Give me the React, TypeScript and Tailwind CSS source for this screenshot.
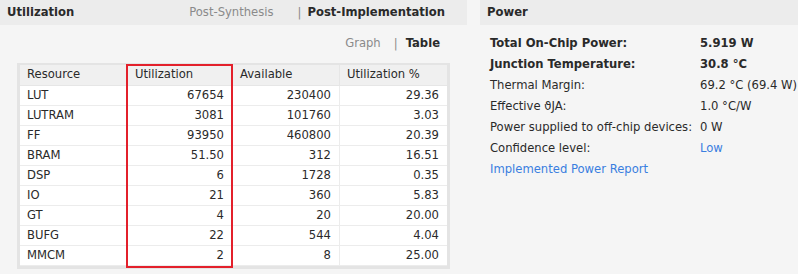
import React from 'react';

const rows = [
  ['LUT', '67654', '230400', '29.36'],
  ['LUTRAM', '3081', '101760', '3.03'],
  ['FF', '93950', '460800', '20.39'],
  ['BRAM', '51.50', '312', '16.51'],
  ['DSP', '6', '1728', '0.35'],
  ['IO', '21', '360', '5.83'],
  ['GT', '4', '20', '20.00'],
  ['BUFG', '22', '544', '4.04'],
  ['MMCM', '2', '8', '25.00'],
];

const power: { label: string; value: string; bold?: boolean; link?: boolean }[] = [
  { label: 'Total On-Chip Power:', value: '5.919 W', bold: true },
  { label: 'Junction Temperature:', value: '30.8 °C', bold: true },
  { label: 'Thermal Margin:', value: '69.2 °C (69.4 W)' },
  { label: 'Effective ϑJA:', value: '1.0 °C/W' },
  { label: 'Power supplied to off-chip devices:', value: '0 W' },
  { label: 'Confidence level:', value: 'Low', link: true },
];

export default function App() {
  return (
    <div className="flex w-[798px] h-[274px] bg-[#f5f5f5] text-[11.6px] text-[#2a2a2a] font-['DejaVu_Sans',sans-serif] overflow-hidden">
      {/* Utilization panel */}
      <div className="w-[467px] flex flex-col">
        <div className="h-[25px] bg-[#ececec] flex items-center pl-[7px] pr-[22px]">
          <span className="font-bold">Utilization</span>
          <div className="ml-auto flex items-center">
            <span className="text-[#8a8a8a]">Post-Synthesis</span>
            <span className="text-[#8a8a8a] ml-[24px] mr-[6px]">|</span>
            <span className="font-bold">Post-Implementation</span>
          </div>
        </div>

        <div className="h-[38px] flex items-center justify-end pr-[27px]">
          <span className="text-[#8a8a8a]">Graph</span>
          <span className="text-[#8a8a8a] ml-[13px] mr-[8px]">|</span>
          <span className="font-bold">Table</span>
        </div>

        <div className="relative ml-[17px] w-[433px] border-[3px] border-t-2 border-[#e4e4e4] bg-white">
          <div className="grid grid-cols-[107px_105px_107px_108px]">
            {['Resource', 'Utilization', 'Available', 'Utilization %'].map((h, i) => (
              <div
                key={h}
                className={`h-[21px] flex items-center pl-[7px] bg-[#f0f0f0] border-b border-[#e6e6e6] ${i > 0 ? 'border-l' : ''}`}
              >
                {h}
              </div>
            ))}
            {rows.map((r) =>
              r.map((c, i) => (
                <div
                  key={r[0] + i}
                  className={`h-[20px] flex items-center border-b border-[#ececec] ${
                    i === 0 ? 'pl-[7px]' : 'justify-end pr-[8px] border-l'
                  }`}
                >
                  {c}
                </div>
              ))
            )}
          </div>
          {/* highlight around Utilization column */}
          <div className="absolute left-[106px] top-[-1px] w-[107px] bottom-[-2px] border-2 border-[#e3202b] pointer-events-none" />
        </div>
      </div>

      {/* Power panel */}
      <div className="ml-[13px] flex-1 flex flex-col">
        <div className="h-[25px] bg-[#ececec] flex items-center pl-[7px]">
          <span className="font-bold">Power</span>
        </div>
        <div className="pl-[10px] pt-[8px] flex flex-col">
          {power.map((p) => (
            <div key={p.label} className="h-[21px] flex items-center">
              <span className={`w-[210px] shrink-0 ${p.bold ? 'font-bold' : ''}`}>{p.label}</span>
              <span className={`whitespace-nowrap ${p.bold ? 'font-bold' : ''} ${p.link ? 'text-[#3a7ee0]' : ''}`}>
                {p.value}
              </span>
            </div>
          ))}
          <div className="h-[21px] flex items-center text-[#3a7ee0]">Implemented Power Report</div>
        </div>
      </div>
    </div>
  );
}
